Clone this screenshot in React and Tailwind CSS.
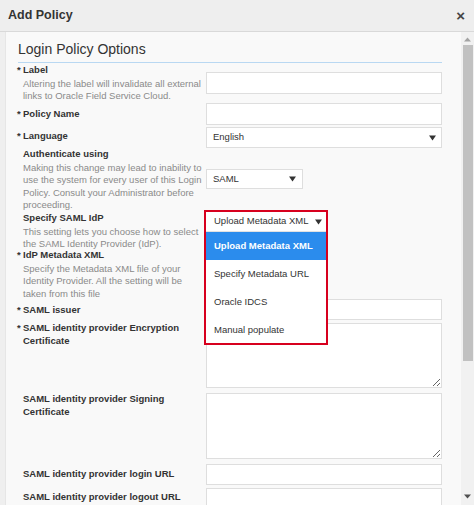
import React from 'react';

const Label = ({ req, children, desc, className = '' }) => (
  <div className={`flex w-[189px] shrink-0 ${className}`}>
    <span className="w-[6px] shrink-0 font-bold text-[#333] leading-[12.5px]">{req ? '*' : ''}</span>
    <div className="whitespace-nowrap">
      <div className="font-bold text-[#333] leading-[12.5px]">{children}</div>
      {desc && <div className="mt-[1px] text-[#8a8a8a] leading-[12.5px]">{desc}</div>}
    </div>
  </div>
);

const Caret = ({ className = '' }) => (
  <svg width="7" height="6" viewBox="0 0 7 6" className={className}>
    <path d="M0 0.5 L7 0.5 L3.5 5.5 Z" fill="#333" />
  </svg>
);

export default function App() {
  return (
    <div className="relative w-[474px] h-[505px] overflow-hidden bg-[#f0f0f0] text-[9.5px] font-[family-name:'Liberation_Sans',Arial,sans-serif]">
      {/* header */}
      <div className="h-[32px] flex items-center justify-between pl-[8px] pr-[9px] bg-[#eeeeee] border-b border-[#d9d9d9] shadow-[0_1px_1px_rgba(0,0,0,0.05)]">
        <span className="text-[12.5px] font-bold text-[#333]">Add Policy</span>
        <span className="text-[15px] font-bold text-[#444] leading-none">×</span>
      </div>

      <div className="flex h-[473px]">
        <div className="w-[6px] bg-[#efefef] border-r border-[#e6e6e6]" />

        {/* panel */}
        <div className="flex-1 bg-[#f9f9f9] pl-[11px] pr-[19px]">
          <div className="ml-[1px] pt-[8px] pb-[4px] border-b border-[#b9d8f2]">
            <div className="text-[14px] leading-[18px] text-[#333]">Login Policy Options</div>
          </div>

          <div className="mt-[1px]">
            {/* Label */}
            <div className="flex h-[39px]">
              <Label req desc={<>Altering the label will invalidate all external<br />links to Oracle Field Service Cloud.</>}>Label</Label>
              <div className="mt-[8px] w-[236px] h-[22px] bg-white border border-[#dedede]" />
            </div>

            {/* Policy Name */}
            <div className="flex h-[24px]">
              <Label req className="pt-[5px]">Policy Name</Label>
              <div className="w-[236px] h-[22px] bg-white border border-[#dedede]" />
            </div>

            {/* Language */}
            <div className="flex h-[21px]">
              <Label req className="pt-[3px]">Language</Label>
              <div className="w-[236px] h-[21px] bg-white border border-[#dedede] flex items-center justify-between pl-[6px] pr-[5px] text-[#333]">
                <span>English</span>
                <Caret />
              </div>
            </div>

            {/* Authenticate using */}
            <div className="flex h-[64px]">
              <Label desc={<>Making this change may lead to inability to<br />use the system for every user of this Login<br />Policy. Consult your Administrator before<br />proceeding.</>}>Authenticate using</Label>
              <div className="mt-[21px] w-[97px] h-[20px] bg-white border border-[#dedede] flex items-center justify-between pl-[6px] pr-[6px] text-[#333]">
                <span>SAML</span>
                <Caret />
              </div>
            </div>

            {/* Specify SAML IdP */}
            <div className="flex h-[37px]">
              <Label desc={<>This setting lets you choose how to select<br />the SAML Identity Provider (IdP).</>}>Specify SAML IdP</Label>
            </div>

            {/* IdP Metadata XML */}
            <div className="flex h-[50px]">
              <Label req desc={<>Specify the Metadata XML file of your<br />Identity Provider. All the setting will be<br />taken from this file</>}>IdP Metadata XML</Label>
            </div>

            {/* SAML issuer */}
            <div className="flex h-[23px]">
              <Label req className="pt-[5px]">SAML issuer</Label>
              <div className="w-[236px] h-[21px] bg-white border border-[#dedede]" />
            </div>

            {/* Encryption Certificate */}
            <div className="flex h-[71px]">
              <Label req>SAML identity provider Encryption<br />Certificate</Label>
              <textarea className="mt-[1px] w-[236px] h-[65px] bg-white border border-[#dedede] outline-none" />
            </div>

            {/* Signing Certificate */}
            <div className="flex h-[71px]">
              <Label>SAML identity provider Signing<br />Certificate</Label>
              <textarea className="w-[236px] h-[66px] bg-white border border-[#dedede] outline-none" />
            </div>

            {/* login URL */}
            <div className="flex h-[24px]">
              <Label className="pt-[4px]">SAML identity provider login URL</Label>
              <div className="w-[236px] h-[21px] bg-white border border-[#dedede]" />
            </div>

            {/* logout URL */}
            <div className="flex h-[24px]">
              <Label className="pt-[3px]">SAML identity provider logout URL</Label>
              <div className="w-[236px] h-[21px] bg-white border border-[#dedede]" />
            </div>
          </div>
        </div>

        {/* scrollbar */}
        <div className="w-[13px] bg-[#f1f1f1] flex flex-col items-center">
          <svg width="7" height="5" viewBox="0 0 7 5" className="mt-[5px]">
            <path d="M0 4.5 L7 4.5 L3.5 0.5 Z" fill="#a3a3a3" />
          </svg>
          <div className="mt-[3px] w-[10px] h-[316px] bg-[#c1c1c1]" />
          <div className="flex-1" />
          <svg width="7" height="5" viewBox="0 0 7 5" className="mb-[6px]">
            <path d="M0 0.5 L7 0.5 L3.5 4.5 Z" fill="#505050" />
          </svg>
        </div>
      </div>

      {/* open dropdown */}
      <div className="absolute left-[204px] top-[210px] w-[124px] h-[135px] border-2 border-[#d7001e] bg-white text-[9.5px] text-[#333]">
        <div className="h-[20px] flex items-center justify-between pl-[8px] pr-[4px] border-b border-[#e2e2e2]">
          <span>Upload Metadata XML</span>
          <Caret />
        </div>
        <div className="h-[28px] flex items-center pl-[8px] bg-[#2b8ced] text-white font-bold">Upload Metadata XML</div>
        <div className="h-[28px] flex items-center pl-[8px]">Specify Metadata URL</div>
        <div className="h-[28px] flex items-center pl-[8px]">Oracle IDCS</div>
        <div className="h-[28px] flex items-center pl-[8px]">Manual populate</div>
      </div>
    </div>
  );
}
